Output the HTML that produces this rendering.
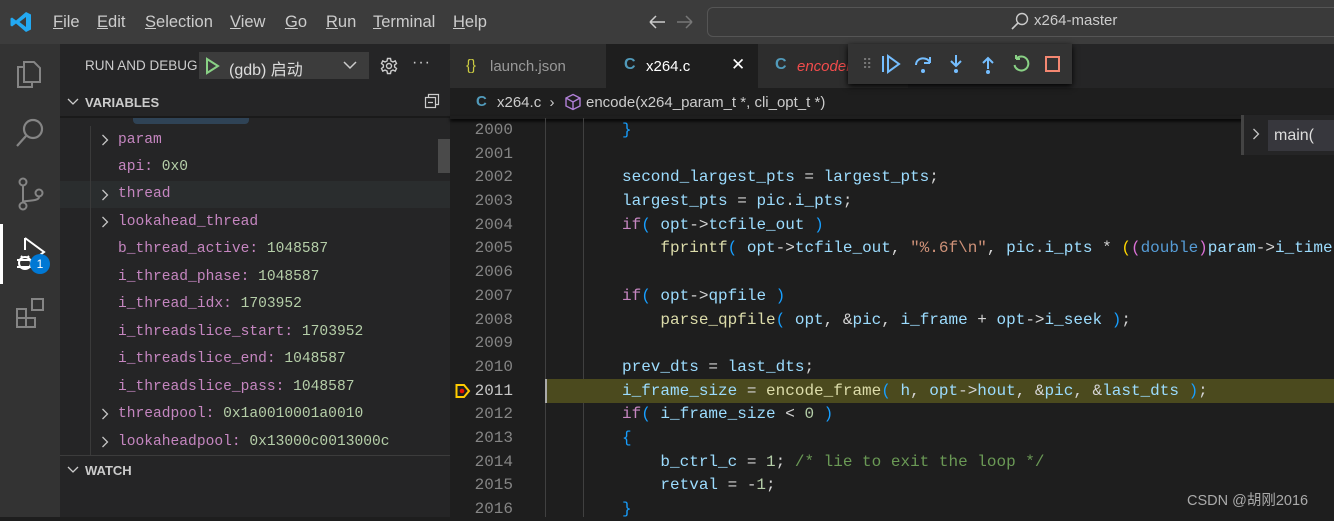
<!DOCTYPE html>
<html><head><meta charset="utf-8"><style>
*{margin:0;padding:0;box-sizing:border-box}
body{width:1334px;height:517px;overflow:hidden;background:#1e1e1e;font-family:"Liberation Sans","Noto Sans CJK SC",sans-serif;color:#ccc;position:relative}
.a{position:absolute}
.mono{font-family:"Liberation Mono","DejaVu Sans Mono",monospace}
.m{position:absolute;top:12px;font-size:16.5px;color:#ccc;line-height:20px}
.ln{position:absolute;left:450px;width:63px;text-align:right;color:#858585;font-size:16px;height:24px;line-height:24px;font-family:"Liberation Mono","DejaVu Sans Mono",monospace}
.cl{position:absolute;left:622px;font-size:16px;height:24px;line-height:24px;white-space:pre;color:#d4d4d4;font-family:"Liberation Mono","DejaVu Sans Mono",monospace}
.v{color:#9cdcfe}.f{color:#dcdcaa}.k{color:#c586c0}.n{color:#b5cea8}.s{color:#ce9178}.c{color:#6a9955}.b1{color:#ffd700}.b2{color:#da70d6}.b3{color:#179fff}.t{color:#569cd6}
.vr{position:absolute;font-size:14.6px;height:27px;line-height:27px;white-space:pre;color:#c586c0}
.vr .n{color:#b5cea8}
.chev{position:absolute;left:101px}
</style></head><body>
<!-- title bar -->
<div class="a" style="left:0;top:0;width:1334px;height:44px;background:#3c3c3c"></div>
<svg class="a" style="left:10px;top:11px" width="22" height="22" viewBox="0 0 22 22"><path d="M16 1 L21 3.5 V18.5 L16 21 L6 12.5 L2 15.5 L0.5 14.5 V7.5 L2 6.5 L6 9.5 Z" fill="#23a9f2"/><path d="M16 6 V16 L9.5 11 Z" fill="#3c3c3c"/></svg>
<div class="m" style="left:53px"><u>F</u>ile</div>
<div class="m" style="left:97px"><u>E</u>dit</div>
<div class="m" style="left:145px"><u>S</u>election</div>
<div class="m" style="left:230px"><u>V</u>iew</div>
<div class="m" style="left:285px"><u>G</u>o</div>
<div class="m" style="left:326px"><u>R</u>un</div>
<div class="m" style="left:373px"><u>T</u>erminal</div>
<div class="m" style="left:453px"><u>H</u>elp</div>
<svg class="a" style="left:649px;top:14px" width="44" height="16" viewBox="0 0 44 16" fill="none" stroke-width="1.5"><path d="M1 8 H16 M1 8 L7 2 M1 8 L7 14" stroke="#ccc"/><path d="M28 8 H43 M43 8 L37 2 M43 8 L37 14" stroke="#777"/></svg>
<div class="a" style="left:707px;top:7px;width:640px;height:30px;border:1px solid #555;border-radius:6px;background:#3a3a3a"></div>
<svg class="a" style="left:1010px;top:11px" width="20" height="20" viewBox="0 0 20 20"><circle cx="12" cy="8" r="5.5" fill="none" stroke="#ccc" stroke-width="1.4"/><path d="M8 12 L2 18" stroke="#ccc" stroke-width="1.6"/></svg>
<div class="a" style="left:1034px;top:12px;font-size:15px;color:#ccc">x264-master</div>
<!-- activity bar -->
<div class="a" style="left:0;top:44px;width:60px;height:473px;background:#333"></div>
<svg class="a" style="left:14px;top:56px" width="32" height="34" viewBox="0 0 32 34" fill="none" stroke="#858585" stroke-width="2"><path d="M10 6 H20 L26 12 V26 H10 Z"/><path d="M10 11 H4 V31 H18 V26"/></svg>
<svg class="a" style="left:14px;top:116px" width="32" height="34" viewBox="0 0 32 34" fill="none" stroke="#858585" stroke-width="2.2"><circle cx="19" cy="13" r="9"/><path d="M12 20 L3 30"/></svg>
<svg class="a" style="left:14px;top:176px" width="32" height="36" viewBox="0 0 32 36" fill="none" stroke="#858585" stroke-width="2"><circle cx="9" cy="6" r="3.5"/><circle cx="9" cy="30" r="3.5"/><circle cx="25" cy="17" r="3.5"/><path d="M9 10 V26 M25 21 C25 26 9 24 9 26"/></svg>
<div class="a" style="left:0;top:224px;width:3px;height:60px;background:#fff"></div>
<svg class="a" style="left:14px;top:236px" width="36" height="40" viewBox="0 0 36 40" fill="none" stroke="#fff" stroke-width="2"><path d="M11 2 V14 M11 2 L30 16 L22 22"/><circle cx="11" cy="27" r="6"/><path d="M3 24 H19 M3 31 H19 M7 20 L9 22 M15 20 L13 22"/></svg>
<div class="a" style="left:30px;top:254px;width:20px;height:20px;border-radius:50%;background:#0078d4;color:#fff;font-size:12px;text-align:center;line-height:20px">1</div>
<svg class="a" style="left:14px;top:296px" width="34" height="34" viewBox="0 0 34 34" fill="none" stroke="#858585" stroke-width="2"><rect x="3" y="13" width="9" height="9"/><rect x="3" y="22" width="9" height="9"/><rect x="12" y="22" width="9" height="9"/><rect x="18" y="3" width="11" height="11"/></svg>
<!-- sidebar -->
<div class="a" style="left:60px;top:44px;width:390px;height:473px;background:#252526"></div>
<div class="a" style="left:85px;top:58px;font-size:13.5px;color:#ccc">RUN AND DEBUG</div>
<div class="a" style="left:199px;top:52px;width:170px;height:27px;background:#3c3c3c"></div>
<svg class="a" style="left:204px;top:57px" width="16" height="18" viewBox="0 0 16 18"><path d="M3 2 L14 9 L3 16 Z" fill="none" stroke="#89d185" stroke-width="2"/></svg>
<div class="a" style="left:229px;top:56px;font-size:16px;color:#ddd">(gdb) 启动</div>
<svg class="a" style="left:343px;top:60px" width="14" height="10" viewBox="0 0 14 10"><path d="M1 2 L7 8 L13 2" fill="none" stroke="#ccc" stroke-width="1.5"/></svg>
<svg class="a" style="left:380px;top:57px" width="18" height="18" viewBox="0 0 18 18" fill="none" stroke="#ccc" stroke-width="1.4"><circle cx="9" cy="9" r="2.5"/><path d="M7.5 1.5 H10.5 L11 4 L13 5 L15.2 3.8 L16.5 6.5 L14.6 8 V10 L16.5 11.5 L15.2 14.2 L13 13 L11 14 L10.5 16.5 H7.5 L7 14 L5 13 L2.8 14.2 L1.5 11.5 L3.4 10 V8 L1.5 6.5 L2.8 3.8 L5 5 L7 4 Z"/></svg>
<div class="a" style="left:412px;top:54px;font-size:16px;color:#ccc;letter-spacing:1px">···</div>
<svg class="a" style="left:66px;top:97px" width="14" height="10" viewBox="0 0 14 10"><path d="M2 2 L7 7 L12 2" fill="none" stroke="#ccc" stroke-width="1.3"/></svg>
<div class="a" style="left:85px;top:95px;font-size:13px;font-weight:bold;color:#ccc">VARIABLES</div>
<svg class="a" style="left:424px;top:93px" width="16" height="16" viewBox="0 0 16 16" fill="none" stroke="#ccc" stroke-width="1.2"><rect x="1.5" y="4.5" width="10" height="10"/><path d="M4.5 4.5 V1.5 H14.5 V11.5 H11.5 M4 9.5 H9"/></svg>
<div class="a" style="left:60px;top:116px;width:390px;height:10px;overflow:hidden">
<div class="a" style="left:73px;top:-8px;width:116px;height:16px;background:#2f4356;border-radius:4px"></div>
<div class="a mono" style="left:30px;top:-12px;font-size:14px;color:#777;white-space:pre">v h: 0x1457d34910</div>
</div>
<div class="a" style="left:60px;top:116px;width:390px;height:2px;background:#1a1a1a"></div>
<div class="a" style="left:60px;top:181px;width:390px;height:27px;background:#2a2d2e"></div>
<div class="a" style="left:90px;top:126px;width:1px;height:329px;background:#3a3a3a"></div>
<div class="a" style="left:438px;top:139px;width:12px;height:34px;background:#4a4a4a"></div>
<svg class="chev" style="top:134px" width="8" height="12" viewBox="0 0 8 12"><path d="M1.5 1 L6.5 6 L1.5 11" fill="none" stroke="#c5c5c5" stroke-width="1.3"/></svg><div class="vr mono" style="left:118px;top:127px">param</div>
<div class="vr mono" style="left:118px;top:154px">api: <span class="n">0x0</span></div>
<svg class="chev" style="top:189px" width="8" height="12" viewBox="0 0 8 12"><path d="M1.5 1 L6.5 6 L1.5 11" fill="none" stroke="#c5c5c5" stroke-width="1.3"/></svg><div class="vr mono" style="left:118px;top:181px">thread</div>
<svg class="chev" style="top:216px" width="8" height="12" viewBox="0 0 8 12"><path d="M1.5 1 L6.5 6 L1.5 11" fill="none" stroke="#c5c5c5" stroke-width="1.3"/></svg><div class="vr mono" style="left:118px;top:209px">lookahead_thread</div>
<div class="vr mono" style="left:118px;top:236px">b_thread_active: <span class="n">1048587</span></div>
<div class="vr mono" style="left:118px;top:264px">i_thread_phase: <span class="n">1048587</span></div>
<div class="vr mono" style="left:118px;top:291px">i_thread_idx: <span class="n">1703952</span></div>
<div class="vr mono" style="left:118px;top:319px">i_threadslice_start: <span class="n">1703952</span></div>
<div class="vr mono" style="left:118px;top:346px">i_threadslice_end: <span class="n">1048587</span></div>
<div class="vr mono" style="left:118px;top:374px">i_threadslice_pass: <span class="n">1048587</span></div>
<svg class="chev" style="top:408px" width="8" height="12" viewBox="0 0 8 12"><path d="M1.5 1 L6.5 6 L1.5 11" fill="none" stroke="#c5c5c5" stroke-width="1.3"/></svg><div class="vr mono" style="left:118px;top:401px">threadpool: <span class="n">0x1a0010001a0010</span></div>
<svg class="chev" style="top:436px" width="8" height="12" viewBox="0 0 8 12"><path d="M1.5 1 L6.5 6 L1.5 11" fill="none" stroke="#c5c5c5" stroke-width="1.3"/></svg><div class="vr mono" style="left:118px;top:429px">lookaheadpool: <span class="n">0x13000c0013000c</span></div>
<div class="a" style="left:60px;top:455px;width:390px;height:1px;background:#3c3c3c"></div>
<svg class="a" style="left:66px;top:465px" width="14" height="10" viewBox="0 0 14 10"><path d="M2 2 L7 7 L12 2" fill="none" stroke="#ccc" stroke-width="1.3"/></svg>
<div class="a" style="left:85px;top:463px;font-size:13px;font-weight:bold;color:#ccc">WATCH</div>
<!-- tabs -->
<div class="a" style="left:450px;top:44px;width:884px;height:44px;background:#252526"></div>
<div class="a" style="left:450px;top:44px;width:156px;height:44px;background:#2d2d2d"></div>
<div class="a" style="left:466px;top:57px;font-size:15px;color:#cbcb41">{}</div>
<div class="a" style="left:490px;top:58px;font-size:15px;color:#999">launch.json</div>
<div class="a" style="left:606px;top:44px;width:152px;height:44px;background:#1e1e1e"></div>
<div class="a" style="left:624px;top:56px;font-size:16px;font-weight:bold;color:#519aba">C</div>
<div class="a" style="left:646px;top:58px;font-size:15px;color:#fff">x264.c</div>
<div class="a" style="left:731px;top:55px;font-size:17px;color:#fff">✕</div>
<div class="a" style="left:758px;top:44px;width:150px;height:44px;background:#2d2d2d"></div>
<div class="a" style="left:775px;top:56px;font-size:16px;font-weight:bold;color:#519aba">C</div>
<div class="a" style="left:797px;top:58px;font-size:15px;color:#f14c4c;font-style:italic">encoder</div>
<!-- debug toolbar -->
<div class="a" style="left:848px;top:44px;width:224px;height:40px;background:#333;box-shadow:0 2px 6px #000"></div>
<div class="a" style="left:862px;top:56px;font-size:14px;color:#777;letter-spacing:-2px">⠿</div>
<svg class="a" style="left:880px;top:53px" width="120" height="22" viewBox="0 0 120 22" fill="none" stroke-width="2">
<path d="M3 3 V19" stroke="#75beff"/><path d="M8 3 L19 11 L8 19 Z" stroke="#75beff"/>
<path d="M36 12 C36 4 48 3 50 10 M50 10 L50 4 M50 10 L44 10" stroke="#75beff"/><circle cx="43" cy="18" r="2" fill="#75beff" stroke="none"/>
<path d="M76 2 V13 M71 8 L76 13 L81 8" stroke="#75beff"/><circle cx="76" cy="18" r="2" fill="#75beff" stroke="none"/>
<path d="M108 16 V5 M103 10 L108 5 L113 10" stroke="#75beff"/><circle cx="108" cy="19" r="2" fill="#75beff" stroke="none"/>
</svg>
<svg class="a" style="left:1011px;top:54px" width="20" height="20" viewBox="0 0 20 20" fill="none" stroke="#89d185" stroke-width="2"><path d="M5 5 A7 7 0 1 1 3.5 11 M5 5 V1 M5 5 H9"/></svg>
<div class="a" style="left:1045px;top:56px;width:15px;height:16px;border:2px solid #f48771"></div>
<!-- breadcrumbs -->
<div class="a" style="left:476px;top:93px;font-size:15px;font-weight:bold;color:#519aba">C</div>
<div class="a" style="left:497px;top:94px;font-size:15px;color:#ccc;white-space:pre">x264.c  ›</div>
<svg class="a" style="left:564px;top:93px" width="18" height="18" viewBox="0 0 18 18" fill="none" stroke="#b180d7" stroke-width="1.4"><path d="M9 1.5 L16 5 V13 L9 16.5 L2 13 V5 Z M2 5 L9 9 L16 5 M9 9 V16.5"/></svg>
<div class="a" style="left:586px;top:94px;font-size:15px;color:#ccc">encode(x264_param_t *, cli_opt_t *)</div>
<div class="a" style="left:450px;top:116px;width:884px;height:3px;box-shadow:0 2px 3px #000"></div>
<!-- code -->
<div class="a" style="left:545px;top:118px;width:1px;height:399px;background:#404040"></div>
<div class="a" style="left:583px;top:118px;width:1px;height:399px;background:#404040"></div>
<div class="a" style="left:545px;top:379px;width:789px;height:24px;background:#4b4a1e"></div>
<div class="a" style="left:545px;top:379px;width:2px;height:24px;background:#aaa"></div>
<div class="ln" style="top:118px">2000</div><div class="cl" style="top:118px"><span class="b3">}</span></div>
<div class="ln" style="top:142px">2001</div>
<div class="ln" style="top:165px">2002</div><div class="cl" style="top:165px"><span class="v">second_largest_pts</span> = <span class="v">largest_pts</span>;</div>
<div class="ln" style="top:189px">2003</div><div class="cl" style="top:189px"><span class="v">largest_pts</span> = <span class="v">pic</span>.<span class="v">i_pts</span>;</div>
<div class="ln" style="top:213px">2004</div><div class="cl" style="top:213px"><span class="k">if</span><span class="b3">(</span> <span class="v">opt</span>-&gt;<span class="v">tcfile_out</span> <span class="b3">)</span></div>
<div class="ln" style="top:236px">2005</div><div class="cl" style="top:236px">    <span class="f">fprintf</span><span class="b3">(</span> <span class="v">opt</span>-&gt;<span class="v">tcfile_out</span>, <span class="s">"%.6f\n"</span>, <span class="v">pic</span>.<span class="v">i_pts</span> * <span class="b1">(</span><span class="b2">(</span><span class="t">double</span><span class="b2">)</span><span class="v">param</span>-&gt;<span class="v">i_timebase</span></div>
<div class="ln" style="top:260px">2006</div>
<div class="ln" style="top:284px">2007</div><div class="cl" style="top:284px"><span class="k">if</span><span class="b3">(</span> <span class="v">opt</span>-&gt;<span class="v">qpfile</span> <span class="b3">)</span></div>
<div class="ln" style="top:308px">2008</div><div class="cl" style="top:308px">    <span class="f">parse_qpfile</span><span class="b3">(</span> <span class="v">opt</span>, &amp;<span class="v">pic</span>, <span class="v">i_frame</span> + <span class="v">opt</span>-&gt;<span class="v">i_seek</span> <span class="b3">)</span>;</div>
<div class="ln" style="top:331px">2009</div>
<div class="ln" style="top:355px">2010</div><div class="cl" style="top:355px"><span class="v">prev_dts</span> = <span class="v">last_dts</span>;</div>
<svg class="a" style="left:455px;top:383px" width="16" height="16" viewBox="0 0 16 16"><path d="M1.5 2 H9 L14 8 L9 14 H1.5 Z" fill="none" stroke="#ffcc00" stroke-width="2"/><circle cx="7" cy="8" r="2.3" fill="#e51400"/></svg>
<div class="ln" style="top:379px;color:#c6c6c6">2011</div><div class="cl" style="top:379px"><span class="v">i_frame_size</span> = <span class="f">encode_frame</span><span class="b3">(</span> <span class="v">h</span>, <span class="v">opt</span>-&gt;<span class="v">hout</span>, &amp;<span class="v">pic</span>, &amp;<span class="v">last_dts</span> <span class="b3">)</span>;</div>
<div class="ln" style="top:402px">2012</div><div class="cl" style="top:402px"><span class="k">if</span><span class="b3">(</span> <span class="v">i_frame_size</span> &lt; <span class="n">0</span> <span class="b3">)</span></div>
<div class="ln" style="top:426px">2013</div><div class="cl" style="top:426px"><span class="b3">{</span></div>
<div class="ln" style="top:450px">2014</div><div class="cl" style="top:450px">    <span class="v">b_ctrl_c</span> = <span class="n">1</span>; <span class="c">/* lie to exit the loop */</span></div>
<div class="ln" style="top:473px">2015</div><div class="cl" style="top:473px">    <span class="v">retval</span> = -<span class="n">1</span>;</div>
<div class="ln" style="top:497px">2016</div><div class="cl" style="top:497px"><span class="b3">}</span></div>
<!-- sticky call stack -->
<div class="a" style="left:1241px;top:115px;width:93px;height:40px;background:#252526;border-left:3px solid #444"></div>
<svg class="a" style="left:1252px;top:128px" width="8" height="12" viewBox="0 0 8 12"><path d="M1.5 1 L6.5 6 L1.5 11" fill="none" stroke="#c5c5c5" stroke-width="1.3"/></svg>
<div class="a" style="left:1268px;top:120px;width:66px;height:31px;background:#37373d"></div>
<div class="a" style="left:1274px;top:127px;font-size:16px;color:#ddd">main(</div>
<div class="a" style="left:1187px;top:489px;font-size:14.5px;color:#aaa">CSDN @胡刚2016</div>
</body></html>
